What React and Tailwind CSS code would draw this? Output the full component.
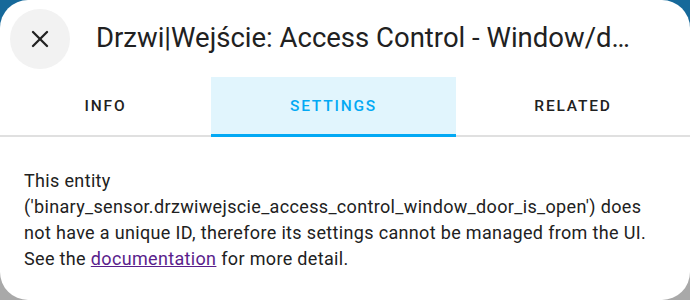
import { X } from 'lucide-react';

export default function App() {
  return (
    <div className="h-[300px] w-[690px] overflow-hidden bg-[linear-gradient(to_bottom,#16699a_0%,#16699a_45%,#a9a9a9_55%,#a9a9a9_100%)] font-['Roboto',sans-serif]">
      <div className="h-full w-full rounded-[28px] bg-white">
        <div className="flex h-[77px] items-center gap-[26px] pl-[10px] pr-[46px]">
          <button type="button" className="flex h-[60px] w-[60px] shrink-0 items-center justify-center rounded-full bg-[#f2f2f2] text-[#212121]">
            <X size={28} strokeWidth={2} />
          </button>
          <h1 className="truncate pb-[2px] text-[27.5px] font-normal text-[#212121]">
            Drzwi|Wejście: Access Control - Window/door is open
          </h1>
        </div>
        <div className="flex h-[60px] border-b-2 border-[#e0e0e0]">
          <div className="flex w-[211px] items-center justify-center pt-[2px] text-[15.5px] font-medium tracking-[1.8px] text-[#212121]">INFO</div>
          <div className="-mb-[2px] flex w-[245px] items-center justify-center border-b-[3px] border-[#03a9f4] bg-[#e1f5fd] pt-[3px] text-[15.5px] font-medium tracking-[1.8px] text-[#03a9f4]">SETTINGS</div>
          <div className="flex flex-1 items-center justify-center pt-[2px] text-[15.5px] font-medium tracking-[1.8px] text-[#212121]">RELATED</div>
        </div>
        <div className="px-6 pt-[31px] text-[18px] leading-[26px] tracking-[0.34px] text-[#212121]">
          <p>
            This entity ('binary_sensor.drzwiwejscie_access_control_window_door_is_open') does not have a unique ID, therefore its settings cannot be managed from the UI. See the{' '}
            <a href="#" className="text-[#5a1e8c] underline">documentation</a> for more detail.
          </p>
        </div>
      </div>
    </div>
  );
}
